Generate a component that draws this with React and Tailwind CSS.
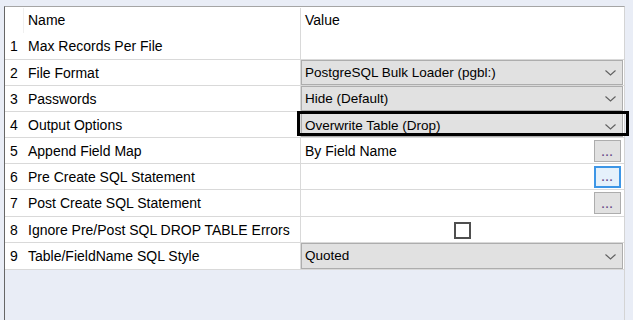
import React from "react";

const rows = [
  { n: 1, name: "Max Records Per File", type: "text", value: "", h: "h-[27px]" },
  { n: 2, name: "File Format", type: "combo", value: "PostgreSQL Bulk Loader (pgbl:)", h: "h-[26px]" },
  { n: 3, name: "Passwords", type: "combo", value: "Hide (Default)", h: "h-[26px]" },
  { n: 4, name: "Output Options", type: "combo", value: "Overwrite Table (Drop)", h: "h-[26px]", focus: true },
  { n: 5, name: "Append Field Map", type: "button", value: "By Field Name", h: "h-[26px]" },
  { n: 6, name: "Pre Create SQL Statement", type: "button", value: "", h: "h-[26px]", active: true },
  { n: 7, name: "Post Create SQL Statement", type: "button", value: "", h: "h-[27px]" },
  { n: 8, name: "Ignore Pre/Post SQL DROP TABLE Errors", type: "check", value: "", h: "h-[26px]" },
  { n: 9, name: "Table/FieldName SQL Style", type: "combo", value: "Quoted", h: "h-[27px]" },
];

function Chevron() {
  return (
    <svg width="11" height="6" viewBox="0 0 11 6" className="shrink-0">
      <path d="M0.5 0.5 L5.5 5 L10.5 0.5" fill="none" stroke="#606060" strokeWidth="1.1" />
    </svg>
  );
}

function Value({ r }) {
  if (r.type === "combo") {
    return (
      <div className="relative h-full w-full pr-[1px]">
        <div
          className={
            "h-full w-full bg-[#e1e1e1] border border-[#adadad] flex items-center justify-between pl-[3px] pr-[6px] text-[13.5px] " +
            (r.focus ? "pt-[4px]" : "pt-[1px]")
          }
        >
          <span className="whitespace-nowrap">{r.value}</span>
          <Chevron />
        </div>
        {r.focus && (
          <div className="absolute top-[-1px] left-[-4px] right-[-5px] h-[25px] border-[3px] border-black" />
        )}
      </div>
    );
  }
  if (r.type === "button") {
    return (
      <div className="h-full w-full flex items-center justify-between pl-[4px] pr-[3px]">
        <span className="whitespace-nowrap pt-[1px]">{r.value}</span>
        <div
          className={
            "w-[27px] h-[22px] flex items-end justify-center pb-[3px] text-[11px] leading-none tracking-[1px] text-[#6a4f8a] font-bold " +
            (r.active ? "bg-[#e5f1fb] border-2 border-[#3d96e6]" : "bg-[#e1e1e1] border border-[#adadad]")
          }
        >
          ...
        </div>
      </div>
    );
  }
  if (r.type === "check") {
    return (
      <div className="h-full w-full flex items-center justify-center pt-[2px]">
        <div className="w-[17px] h-[17px] border-2 border-[#4f4f4f] bg-white" />
      </div>
    );
  }
  return <div className="h-full w-full pl-[4px] flex items-center">{r.value}</div>;
}

export default function App() {
  return (
    <div
      className="w-[633px] h-[320px] bg-[#e9edf6] flex flex-col overflow-hidden text-[14px] text-black"
      style={{ fontFamily: '"Liberation Sans", Arial, sans-serif' }}
    >
      <div className="h-[6px] shrink-0" />
      <div className="flex-1 ml-[4px] mr-[8px] border-l border-t border-r border-l-[#666666] border-t-[#a5a5a5] border-r-[#d4d4d4] flex flex-col">
        <div className="h-[26px] flex bg-white shrink-0 pt-[1px]">
          <div className="w-[19px] border-r border-[#f0f0f0]" />
          <div className="w-[277px] pl-[4px] flex items-center border-r border-[#d9d9d9]">Name</div>
          <div className="flex-1 pl-[4px] flex items-center">Value</div>
        </div>
        {rows.map((r) => (
          <div key={r.n} className={"flex bg-white border-b border-[#d9d9d9] shrink-0 " + r.h}>
            <div className="w-[19px] pl-[5px] pt-[1px] flex items-center">{r.n}</div>
            <div className="w-[277px] pl-[4px] pt-[1px] flex items-center border-r border-[#d9d9d9] whitespace-nowrap">
              {r.name}
            </div>
            <div className="flex-1 min-w-0">
              <Value r={r} />
            </div>
          </div>
        ))}
      </div>
    </div>
  );
}
